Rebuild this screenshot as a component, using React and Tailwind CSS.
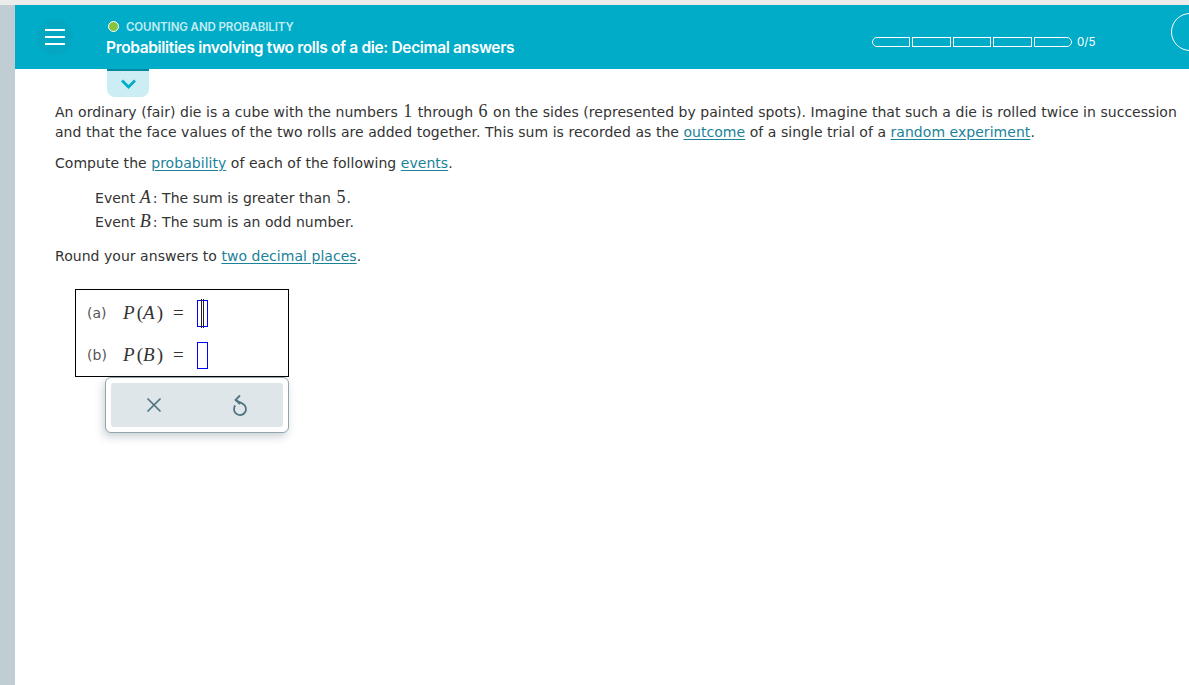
import { X } from "lucide-react";

const linkCls = "text-[#1a8299] underline underline-offset-2";

function M({ children, italic }) {
  return (
    <span className={`font-['Liberation_Serif',serif] text-[18px] ${italic ? "italic mr-[2px]" : "px-[1px]"}`}>
      {children}
    </span>
  );
}

function Progress() {
  return (
    <div className="flex items-center mt-[9px]">
      <div className="flex gap-[2px]">
        <div className="w-[38px] h-[10px] border border-white rounded-l-full"></div>
        <div className="w-[39px] h-[10px] border border-white"></div>
        <div className="w-[38px] h-[10px] border border-white"></div>
        <div className="w-[39px] h-[10px] border border-white"></div>
        <div className="w-[38px] h-[10px] border border-white rounded-r-full"></div>
      </div>
      <span className="ml-[5px] mt-[2px] w-[20px] text-[11.5px] text-white font-['Inter',sans-serif]">0/5</span>
    </div>
  );
}

function Header() {
  return (
    <div className="h-[64px] bg-[#00acc8] flex items-center shrink-0">
      <div className="ml-[22px] w-[36px] h-[36px] rounded-full bg-[#03a7c2] flex flex-col items-center justify-center gap-[5px]">
        <div className="w-[20px] h-[2px] bg-white"></div>
        <div className="w-[20px] h-[2px] bg-white"></div>
        <div className="w-[20px] h-[2px] bg-white"></div>
      </div>
      <div className="ml-[33px] flex-1 font-['Inter',sans-serif] pt-[3px]">
        <div className="flex items-center gap-[7px] ml-[2px]">
          <div className="w-[11px] h-[11px] rounded-full bg-[#86c440] border border-white"></div>
          <span className="text-[11.5px] font-semibold text-[#c3ecf3] tracking-[-0.1px] leading-[14px]">COUNTING AND PROBABILITY</span>
        </div>
        <div className="mt-[4px] text-[15.5px] font-semibold text-white tracking-[-0.34px] leading-[20px]">
          Probabilities involving two rolls of a die: Decimal answers
        </div>
      </div>
      <Progress />
      <div className="ml-[74px] -mr-[20px] w-[38px] h-[38px] mb-[10px] rounded-full border border-white shrink-0"></div>
    </div>
  );
}

function Row({ label, name, active }) {
  return (
    <div className="flex items-center h-[32px]">
      <span className="w-[36px] text-[14px] text-[#555]">{label}</span>
      <span className="w-[41px] text-[#333] font-['Liberation_Serif',serif] text-[19px] whitespace-nowrap">
        <span className="italic">P</span>
        <span className="ml-[2px]">(</span>
        <span className="italic">{name}</span>
        <span className="ml-[2px]">)</span>
      </span>
      <span className="ml-[9px] text-[#333] font-['Liberation_Serif',serif] text-[19px]">=</span>
      <div className="relative ml-[13px] w-[11px] h-[27px] border border-[#0000ff]">
        {active && (
          <div className="absolute left-[3px] -top-[2px] w-[3px] h-[29px] border-x border-[#222]"></div>
        )}
      </div>
    </div>
  );
}

export default function App() {
  return (
    <div className="h-[685px] w-[1189px] overflow-hidden bg-white flex flex-col font-['DejaVu_Sans',sans-serif] text-[#333]">
      <div className="h-[5px] bg-[#ececec] shrink-0"></div>
      <div className="flex flex-1 min-h-0">
        <div className="w-[15px] bg-[#c0cdd3] shrink-0"></div>
        <div className="flex-1 min-w-0 overflow-hidden">
          <Header />
          <div className="ml-[92px] w-[42px] h-[28px] bg-[#ccedf3] rounded-b-[8px] border-t-2 border-[#05889f] flex items-center justify-center">
            <svg width="17" height="12" viewBox="0 0 17 12" fill="none" stroke="#00acc8" strokeWidth="2.8">
              <path d="M2 2.5l6.5 6.5 6.5-6.5" />
            </svg>
          </div>

          <div className="ml-[40px] w-[1140px] text-[14px] leading-[20px] mt-[4px] whitespace-nowrap tracking-[0.04px]">
            <p>
              An ordinary (fair) die is a cube with the numbers <M>1</M> through <M>6</M> on the sides (represented by painted spots). Imagine that such a die is rolled twice in succession
            </p>
            <p>
              and that the face values of the two rolls are added together. This sum is recorded as the <span className={linkCls}>outcome</span> of a single trial of a <span className={linkCls}>random experiment</span>.
            </p>
            <p className="mt-[11px]">
              Compute the <span className={linkCls}>probability</span> of each of the following <span className={linkCls}>events</span>.
            </p>
            <div className="ml-[40px] mt-[14px]">
              <p className="h-[24px]">Event <M italic>A</M>: The sum is greater than <M>5</M>.</p>
              <p className="h-[24px]">Event <M italic>B</M>: The sum is an odd number.</p>
            </div>
            <p className="mt-[11px]">
              Round your answers to <span className={linkCls}>two decimal places</span>.
            </p>

            <div className="ml-[20px] mt-[23px] w-[214px] h-[88px] border border-black pl-[11px] pt-[7px] flex flex-col gap-[10px]">
              <Row label="(a)" name="A" active />
              <Row label="(b)" name="B" />
            </div>
            <div className="ml-[50px] w-[184px] h-[56px] p-[5px] bg-white border border-[#8fa5ae] rounded-[6px] shadow-[-2px_4px_8px_rgba(60,80,90,0.25)]">
              <div className="h-full bg-[#dfe6e9] rounded-[3px] flex items-center text-[#4f7480]">
                <div className="w-[86px] flex justify-center"><X size={24} strokeWidth={1.7} /></div>
                <div className="w-[86px] flex justify-center">
                  <svg width="30" height="30" viewBox="0 0 30 30" fill="none" stroke="currentColor" strokeWidth="1.8">
                    <path d="M15 5.5L10.5 10l4.5 4.2" />
                    <path d="M10.5 10L17.5 13.6A6 6 0 1 1 10.2 15.4" />
                  </svg>
                </div>
              </div>
            </div>
          </div>
        </div>
      </div>
    </div>
  );
}
